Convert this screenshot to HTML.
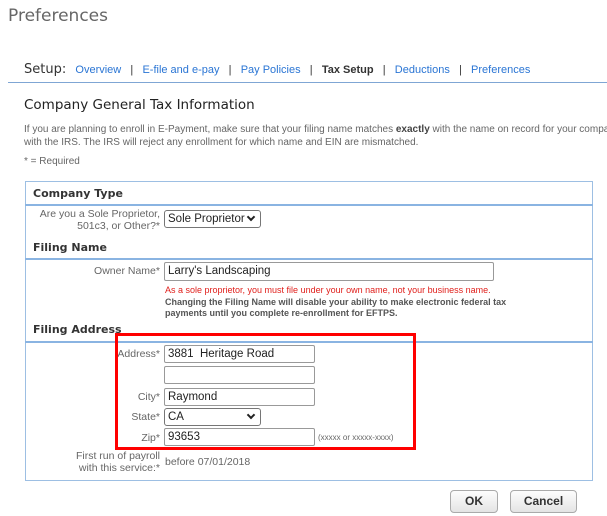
<!DOCTYPE html>
<html><head><style>
body{margin:0;width:607px;height:516px;overflow:hidden;background:#fff;font-family:"Liberation Sans",sans-serif;position:relative}
.a{position:absolute;white-space:nowrap}
.lbl{font-size:10.5px;color:#666;text-align:right}
.inp{position:absolute;border:1px solid #999;border-radius:2px;background:#fff;box-sizing:border-box;font-size:11.5px;color:#222;padding:1px 3px;line-height:14px;overflow:hidden;white-space:nowrap}
.sel{border:1px solid #767676;border-radius:3px}
.sel:after{content:"";position:absolute;right:6px;top:3px;width:4px;height:4px;border-right:2px solid #222;border-bottom:2px solid #222;transform:rotate(45deg)}
.nav a{color:#2a75d4;text-decoration:none}
.hd{font-size:11px;font-weight:bold;color:#333;font-family:"DejaVu Sans",sans-serif}
.line{position:absolute;left:25px;width:568px;height:2px;background:#8ab4e2}
.btn{position:absolute;border:1px solid #aaa;border-radius:4px;background:linear-gradient(#fdfdfd,#e4e4e4);font-size:12px;font-weight:bold;color:#333;text-align:center;line-height:21px;box-sizing:border-box;height:23px}
</style></head><body>
<div class="a" style="left:8px;top:6px;font-size:17px;color:#666;font-family:'DejaVu Sans',sans-serif">Preferences</div>
<div class="a nav" style="left:24px;top:62px;font-size:11px;color:#333">
<span style="font-family:'DejaVu Sans',sans-serif;font-size:13px;color:#333">Setup:</span>&nbsp;&nbsp; <a>Overview</a> &nbsp; | &nbsp; <a>E-file and e-pay</a> &nbsp; | &nbsp; <a>Pay Policies</a> &nbsp; | &nbsp; <b>Tax Setup</b> &nbsp; | &nbsp; <a>Deductions</a> &nbsp; | &nbsp; <a>Preferences</a></div>
<div style="position:absolute;left:8px;top:82px;width:599px;height:1px;background:#7fa6d4"></div>
<div class="a" style="left:24px;top:97px;font-size:13.5px;color:#222;font-family:'DejaVu Sans',sans-serif">Company General Tax Information</div>
<div class="a" style="left:24px;top:123px;font-size:10px;color:#666;line-height:13px">If you are planning to enroll in E-Payment, make sure that your filing name matches <b style="color:#444">exactly</b> with the name on record for your company<br>with the IRS. The IRS will reject any enrollment for which name and EIN are mismatched.</div>
<div class="a" style="left:24px;top:156px;font-size:10px;color:#666">* = Required</div>
<div style="position:absolute;left:25px;top:181px;width:568px;height:300px;border:1px solid #9dbfe3;box-sizing:border-box"></div>
<div class="a hd" style="left:33px;top:187px">Company Type</div>
<div class="line" style="top:204px"></div>
<div class="a lbl" style="right:447px;top:208px;line-height:12px">Are you a Sole Proprietor,<br>501c3, or Other?*</div>
<div class="inp sel" style="left:164px;top:210px;width:97px;height:18px">Sole Proprietor</div>
<div class="a hd" style="left:33px;top:241px">Filing Name</div>
<div class="line" style="top:258px"></div>
<div class="a lbl" style="right:447px;top:265px">Owner Name*</div>
<div class="inp" style="left:164px;top:262px;width:330px;height:19px">Larry's Landscaping</div>
<div class="a" style="left:165px;top:285px;font-size:9px;line-height:11.5px;color:#555;font-weight:bold"><span style="color:#e0201c;font-weight:normal">As a sole proprietor, you must file under your own name, not your business name.</span><br>Changing the Filing Name will disable your ability to make electronic federal tax<br>payments until you complete re-enrollment for EFTPS.</div>
<div class="a hd" style="left:33px;top:323px">Filing Address</div>
<div class="line" style="top:341px"></div>
<div class="a lbl" style="right:447px;top:348px">Address*</div>
<div class="inp" style="left:164px;top:345px;width:151px;height:18px">3881&nbsp; Heritage Road</div>
<div class="inp" style="left:164px;top:366px;width:151px;height:18px"></div>
<div class="a lbl" style="right:447px;top:391px">City*</div>
<div class="inp" style="left:164px;top:388px;width:151px;height:18px">Raymond</div>
<div class="a lbl" style="right:447px;top:411px">State*</div>
<div class="inp sel" style="left:164px;top:408px;width:97px;height:18px">CA</div>
<div class="a lbl" style="right:447px;top:432px">Zip*</div>
<div class="inp" style="left:164px;top:428px;width:151px;height:18px">93653</div>
<div class="a" style="left:318px;top:433px;font-size:8px;color:#666">(xxxxx or xxxxx-xxxx)</div>
<div class="a lbl" style="right:447px;top:450px;line-height:12px">First run of payroll<br>with this service:*</div>
<div class="a" style="left:165px;top:456px;font-size:10.5px;color:#666">before 07/01/2018</div>
<div style="position:absolute;left:115px;top:333px;width:301px;height:117px;border:3px solid #f00;box-sizing:border-box"></div>
<div class="btn" style="left:450px;top:490px;width:48px">OK</div>
<div class="btn" style="left:510px;top:490px;width:67px">Cancel</div>
</body></html>
